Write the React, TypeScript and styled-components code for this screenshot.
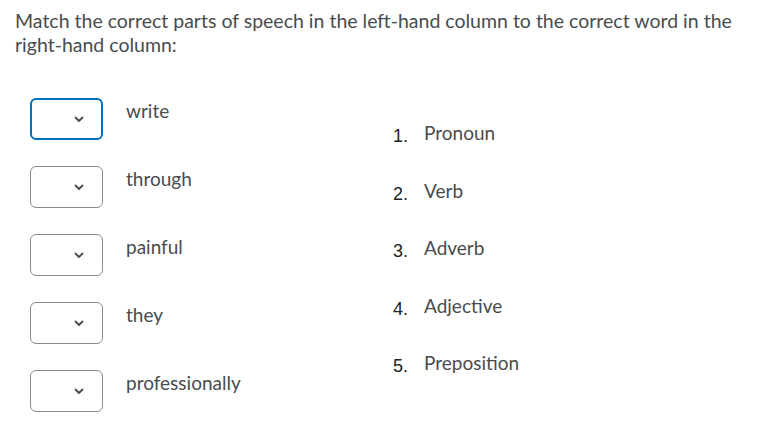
import styled, { createGlobalStyle } from 'styled-components';

const GlobalStyle = createGlobalStyle`
  html, body {
    margin: 0;
    padding: 0;
    background: #ffffff;
  }
  body {
    font-family: Lato, "Noto Sans", sans-serif;
    color: #494c4e;
  }
`;

const Page = styled.div`
  padding: 9px 15px 0 15px;
`;

const Prompt = styled.p`
  margin: 0;
  font-size: 19.5px;
  line-height: 24px;
  width: 740px;
`;

const Columns = styled.div`
  display: flex;
  margin-top: 41px;
`;

const LeftColumn = styled.div`
  display: flex;
  flex-direction: column;
  gap: 26px;
  padding-left: 15px;
  width: 363px;
`;

const Row = styled.div`
  display: flex;
  align-items: flex-start;
  gap: 23px;
`;

const SelectBox = styled.div<{ $focused?: boolean }>`
  box-sizing: border-box;
  width: 73px;
  height: 42px;
  border-radius: 6px;
  border: ${(p) => (p.$focused ? '2px solid #006fbf' : '1px solid #868c8f')};
  display: flex;
  align-items: center;
  justify-content: flex-end;
  padding-right: ${(p) => (p.$focused ? '17px' : '18px')};
  background: #fff;
`;

const Word = styled.span`
  font-size: 19px;
  line-height: 24px;
  padding-top: 1px;
`;

const Choices = styled.ol`
  list-style: none;
  margin: 23px 0 0 0;
  padding: 0;
  display: flex;
  flex-direction: column;
  gap: 33.5px;
`;

const Choice = styled.li`
  display: flex;
  align-items: baseline;
  font-size: 19px;
  line-height: 24px;
  height: 24px;
`;

const Num = styled.span`
  width: 31px;
  font-family: "Liberation Sans", Arial, sans-serif;
  font-size: 18px;
  color: #202122;
  position: relative;
  top: 2px;
`;

const Chevron = () => (
  <svg width="10" height="7" viewBox="0 0 10 7">
    <path d="M1.5 1.5 L5 5 L8.5 1.5" fill="none" stroke="#494c4e" strokeWidth="1.8" strokeLinecap="round" strokeLinejoin="round" />
  </svg>
);

const words = ['write', 'through', 'painful', 'they', 'professionally'];
const parts = ['Pronoun', 'Verb', 'Adverb', 'Adjective', 'Preposition'];

export default function App() {
  return (
    <>
      <GlobalStyle />
      <Page>
        <Prompt>
          Match the correct parts of speech in the left-hand column to the correct word in the right-hand column:
        </Prompt>
        <Columns>
          <LeftColumn>
            {words.map((w, i) => (
              <Row key={w}>
                <SelectBox $focused={i === 0}>
                  <Chevron />
                </SelectBox>
                <Word>{w}</Word>
              </Row>
            ))}
          </LeftColumn>
          <Choices>
            {parts.map((p, i) => (
              <Choice key={p}>
                <Num>{i + 1}.</Num>
                {p}
              </Choice>
            ))}
          </Choices>
        </Columns>
      </Page>
    </>
  );
}
